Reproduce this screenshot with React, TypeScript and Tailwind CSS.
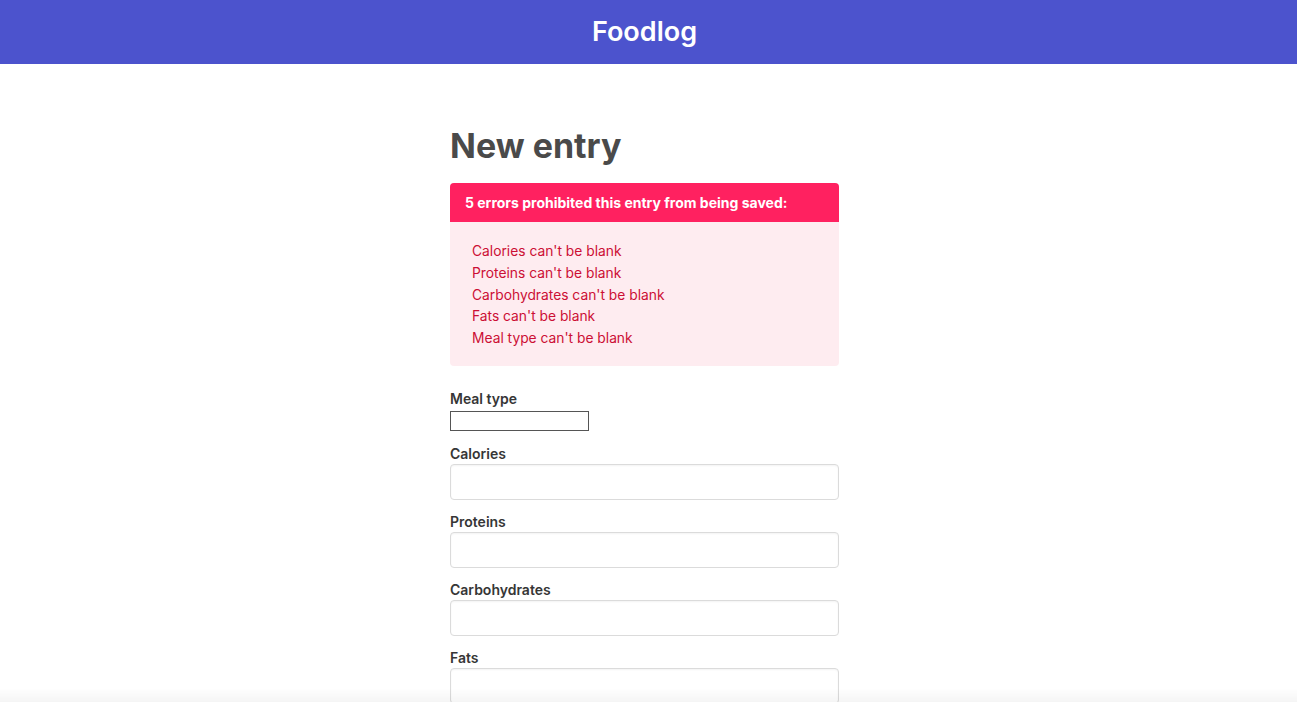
import React from 'react';

const errors = [
  "Calories can't be blank",
  "Proteins can't be blank",
  "Carbohydrates can't be blank",
  "Fats can't be blank",
  "Meal type can't be blank",
];

const numberFields = ['Calories', 'Proteins', 'Carbohydrates', 'Fats'];

export default function App() {
  return (
    <div className="min-h-screen bg-white pr-2 font-['Inter','Noto_Sans',sans-serif] text-[#4a4a4a]">
      <header className="flex h-16 items-center justify-center bg-[#4c53cd] -mr-2 pr-2">
        <h1 className="text-[27px] font-semibold text-white">Foodlog</h1>
      </header>

      <main className="mx-auto w-[389px] pt-[58px] pb-16">
        <h2 className="text-[34px] leading-[48px] font-bold text-[#4a4a4a]">New entry</h2>

        <div className="mt-[13px] overflow-hidden rounded-[4px] bg-[#feecf0]">
          <div className="flex h-[39px] items-center bg-[#ff2160] px-[15px] text-[14px] font-bold text-white">
            5 errors prohibited this entry from being saved:
          </div>
          <ul className="px-[22px] pt-[19px] pb-[16px] text-[13.8px] leading-[21.75px] text-[#cc0f35]">
            {errors.map((e) => (
              <li key={e}>{e}</li>
            ))}
          </ul>
        </div>

        <form className="mt-[22px]">
          <div className="mb-[12px]">
            <label className="block text-[14px] leading-[21px] font-semibold text-[#363636]">Meal type</label>
            <select className="mt-[2px] block h-5 w-[139px] appearance-none border border-[#555] bg-white" />
          </div>
          {numberFields.map((f) => (
            <div key={f} className="mb-[11px]">
              <label className="block text-[14px] leading-[21px] font-semibold text-[#363636]">{f}</label>
              <input
                type="number"
                className="block h-9 w-full rounded-[4px] border border-[#dbdbdb] bg-white px-3 shadow-[inset_0_1px_2px_rgba(10,10,10,0.05)]"
              />
            </div>
          ))}
        </form>
      </main>

      <div className="pointer-events-none fixed inset-x-0 bottom-0 h-[14px] bg-gradient-to-t from-black/[0.04] to-transparent" />
    </div>
  );
}
